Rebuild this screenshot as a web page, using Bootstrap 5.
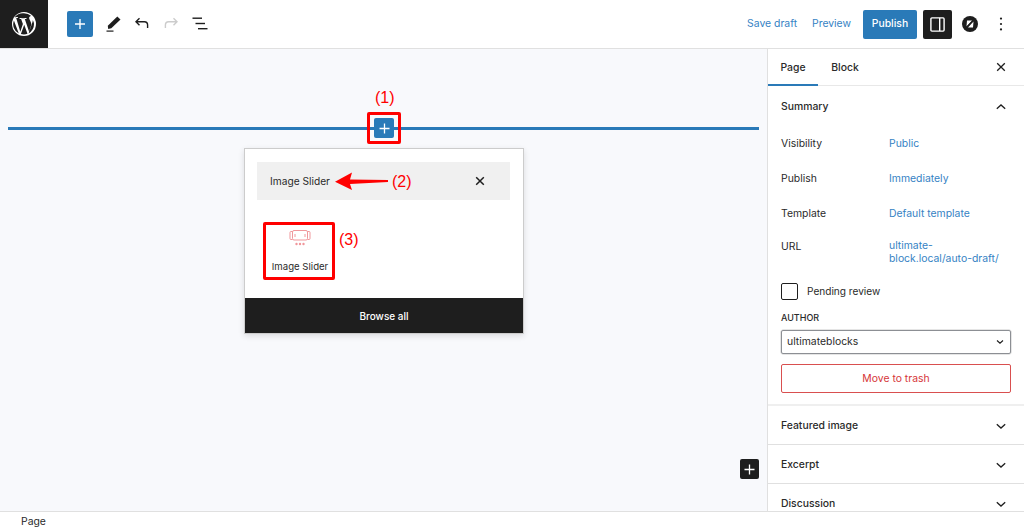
<!DOCTYPE html>
<html lang="en"><head><meta charset="utf-8"><title>Editor</title>
<link href="https://cdn.jsdelivr.net/npm/bootstrap@5.3.0/dist/css/bootstrap.min.css" rel="stylesheet">
<style>
html,body{height:531px;overflow:hidden}
body{font-family:Inter,"Liberation Sans",sans-serif;font-size:10.4px;color:#2a2a2a;background:#fff;line-height:14px}
.ed-top{height:49px;border-bottom:1px solid #e0e0e0;flex:none}
.ed-logo{width:48px;height:48px;background:#1e1e1e}
.ed-add{width:26px;height:26px;background:#2a7ab8;border-radius:2px;margin-left:19px}
.ed-tools{gap:9px;margin-left:10px}
.ed-ic{width:20px;height:20px;display:block}
.ed-link{color:#3582c4}
.ed-link2{margin-left:15px}
.ed-publish{background:#2a7ab8;color:#fff;height:29px;width:54px;border-radius:2px;font-weight:500;margin-left:12px}
.ed-toggle{width:29px;height:29px;background:#1e1e1e;border-radius:2px;margin-left:6px}
.ed-zic{margin-left:10px}
.ed-dots{margin-left:13px;margin-right:13px}
.ed-main{height:462px;flex:none;overflow:hidden}
.ed-canvas{background:#f8f9fc;width:767px;position:relative;flex:none}
.ed-side{width:257px;border-left:1px solid #e0e0e0;flex:none;background:#fff;overflow:hidden}
.ed-tabs{height:37px;border-bottom:1px solid #e8e8e8;padding-right:17px;flex:none}
.ed-tab{width:50px;height:37px;font-weight:500;text-align:center;line-height:38px}
.ed-tab2{width:54px}
.ed-tab-on{box-shadow:inset 0 -2px 0 #2a7ab8}
.ed-sec{border-bottom:1px solid #e0e0e0;height:39px;padding:2px 17px 0 13px;font-weight:500;flex:none}
.ed-sum{padding:0 13px;height:320px;border-bottom:2px solid #efefef;flex:none}
.ed-sumh{height:40px;font-weight:500;padding:1px 4px 0 0}
.ed-row{display:flex;height:35px;align-items:center}
.ed-lab{width:108px;flex:none}
.ed-url{height:46px;align-items:flex-start;padding-top:9px}
.ed-url .ed-val{line-height:13px;margin-top:-1px}
.ed-val{color:#3582c4}
.ed-chk{width:17px;height:17px;border:1px solid #1e1e1e;border-radius:2px;margin-right:9px}
.ed-pend{margin-top:5px;height:18px;font-size:10.1px}
.ed-auth{font-size:9px;margin-top:12px;line-height:12px;font-weight:500}
.ed-sel{height:24px;border:1px solid #8c8f94;border-radius:2px;padding:0 5px;margin-top:6px;box-shadow:0 0 0 .5px #ccc}
.ed-trash{height:29px;border:1px solid #d94f4f;border-radius:2px;color:#d63638;margin-top:10px}
.ed-status{height:20px;border-top:1px solid #e0e0e0;padding:1px 0 0 21px;flex:none}
.ed-line{position:absolute;left:8px;right:8px;top:78px;height:3px;background:#2a7ab8}
.ed-plus{position:absolute;left:374px;top:69px;width:20px;height:20px;background:#2a7ab8;border-radius:2px}
.ed-box{position:absolute;border:3px solid #f00;border-radius:2px}
.ed-box1{left:367px;top:63px;width:34px;height:32px}
.ed-box3{left:263px;top:173px;width:72px;height:58px}
.ed-note{position:absolute;color:#f00;font-family:"Liberation Sans",sans-serif;font-size:16px;line-height:18px}
.ed-n1{left:375px;top:40px}
.ed-n2{left:392px;top:124px}
.ed-n3{left:339px;top:182px}
.ed-arrow{position:absolute;left:334px;top:123px}
.ed-pop{position:absolute;left:244px;top:99px;width:280px;height:186px;background:#fff;border:1px solid #ccc;box-shadow:0 2px 6px rgba(0,0,0,.12)}
.ed-search{height:38px;margin:13px 13px 0 12px;background:#f0f0f0;padding:0 24px 0 13px;font-size:10.2px}
.ed-item{position:absolute;left:25px;top:80px;width:60px;text-align:center;font-size:9.6px;white-space:nowrap}
.ed-lbl{margin-top:13px}
.ed-browse{margin-top:auto;height:35px;background:#1e1e1e;color:#fff;font-weight:500;font-size:10px;padding-top:1px}
.ed-dark{position:absolute;left:740px;top:410px;width:19px;height:20px;background:#1e1e1e;border-radius:2px}
</style></head>
<body class="d-flex flex-column">
<header class="ed-top d-flex align-items-center">
  <div class="ed-logo d-flex align-items-center justify-content-center">
    <svg width="24" height="24" viewBox="0 0 24 24" fill="#fff"><path fill-rule="evenodd" d="M12 0a12 12 0 1 0 0 24 12 12 0 0 0 0-24zm0 1.200a10.800 10.800 0 0 1 7.300 2.850c-.1 0-.2-.02-.3-.02-1.100 0-1.900 1-1.900 2 0 .9.500 1.700 1.100 2.600.4.800 1 1.800 1 3.300 0 1-.4 2.200-.9 3.900l-1.200 4-4.300-12.800c.7 0 1.400-.1 1.400-.1.600-.1.600-1 0-1 0 0-1.900.2-3.200.2-1.200 0-3.100-.2-3.100-.2-.7 0-.7 1 0 1 0 0 .6.100 1.200.1l1.800 5-2.600 7.700L4.200 6.100c.7 0 1.400-.1 1.400-.1.600-.1.600-1 0-1 0 0-1.600.1-3 .2A10.800 10.800 0 0 1 12 1.200zM1.900 8.400l4.900 13.200A10.800 10.800 0 0 1 1.900 8.400zm10.300 4.400 3.300 9a10.800 10.800 0 0 1-6.600.2zm9-3.900c.5.900.8 1.900.8 3.100a10.800 10.800 0 0 1-5.400 9.400l3.300-9.600c.6-1.500.8-2.700.8-2.900 0-.3 0-.6-.1-.8z"/></svg>
  </div>
  <div class="ed-add d-flex align-items-center justify-content-center">
    <svg width="14" height="14" viewBox="0 0 14 14" stroke="#fff" stroke-width="1.400"><path d="M7 2v10M2 7h10"/></svg>
  </div>
  <div class="ed-tools d-flex align-items-center">
    <svg class="ed-ic" viewBox="0 0 20 20" fill="#1e1e1e"><path d="M14.300 2.500 17.500 5.600 8.300 14.200 5.200 15 4.800 11.800z"/><rect x="3.500" y="16.500" width="7" height="1.200"/></svg>
    <svg class="ed-ic" viewBox="0 0 20 20" fill="none" stroke="#1e1e1e" stroke-width="1.400"><path d="M7.500 4.300 4 7.800l3.500 3.400M4 7.800h8.400c2 0 3.200 1.300 3.200 3.300V14"/></svg>
    <svg class="ed-ic" viewBox="0 0 20 20" fill="none" stroke="#ccc" stroke-width="1.400"><path d="M12.500 4.300 16 7.800l-3.500 3.400M16 7.800H7.600c-2 0-3.200 1.300-3.200 3.300V14"/></svg>
    <svg class="ed-ic" viewBox="0 0 20 20" fill="#1e1e1e"><rect x="2.500" y="3.500" width="9.500" height="1.400"/><rect x="5.500" y="8.800" width="9.500" height="1.400"/><rect x="8" y="14" width="9.500" height="1.400"/></svg>
  </div>
  <div class="d-flex align-items-center ms-auto">
    <span class="ed-link">Save draft</span>
    <span class="ed-link ed-link2">Preview</span>
    <span class="ed-publish d-flex align-items-center justify-content-center">Publish</span>
    <span class="ed-toggle d-flex align-items-center justify-content-center">
      <svg width="15" height="15" viewBox="0 0 15 15" fill="none" stroke="#fff" stroke-width="1.400"><rect x=".9" y=".9" width="13.200" height="13.200" rx="1"/><path d="M9.700 1v13"/></svg>
    </span>
    <svg class="ed-zic" width="16" height="16" viewBox="0 0 16 16"><circle cx="8" cy="8" r="8" fill="#1e1e1e"/><path d="M5 4.500h5L4.500 10.500zM11 11.500H6l5.500-6z" fill="#fff"/><path d="M4 11.500 11.500 4" stroke="#1e1e1e" stroke-width="1"/></svg>
    <svg class="ed-dots" width="20" height="20" viewBox="0 0 20 20" fill="#1e1e1e"><circle cx="10" cy="4.600" r="1.100"/><circle cx="10" cy="10" r="1.100"/><circle cx="10" cy="15.400" r="1.100"/></svg>
  </div>
</header>
<div class="ed-main d-flex">
  <main class="ed-canvas">
    <div class="ed-line"></div>
    <div class="ed-plus d-flex align-items-center justify-content-center">
      <svg width="13" height="13" viewBox="0 0 13 13" stroke="#fff" stroke-width="1.300"><path d="M6.500 1.500v10M1.500 6.500h10"/></svg>
    </div>
    <div class="ed-box ed-box1"></div>
    <div class="ed-note ed-n1">(1)</div>
    <div class="ed-pop d-flex flex-column">
      <div class="ed-search d-flex align-items-center justify-content-between">
        <span>Image Slider</span>
        <svg width="12" height="12" viewBox="0 0 12 12" stroke="#1e1e1e" stroke-width="1.500"><path d="M2.200 2.200l7.600 7.600M9.800 2.200l-7.600 7.600"/></svg>
      </div>
      <div class="ed-item">
        <svg class="d-block mx-auto" width="22" height="18" viewBox="0 0 22 18" fill="none" stroke="#f0979b" stroke-width="1"><rect x="3.500" y="1.500" width="15" height="9.500" rx="1.500"/><path d="M3.500 2.500H2a1 1 0 0 0-1 1v6a1 1 0 0 0 1 1h1.500M18.500 2.500H20a1 1 0 0 1 1 1v6a1 1 0 0 1-1 1h-1.500M6 5v3M16 5v3"/><g fill="#f0979b" stroke="none"><circle cx="7.500" cy="15" r="1.200"/><circle cx="11" cy="15" r="1.200"/><circle cx="14.500" cy="15" r="1.200"/></g></svg>
        <div class="ed-lbl">Image Slider</div>
      </div>
      <div class="ed-browse d-flex align-items-center justify-content-center">Browse all</div>
    </div>
    <div class="ed-box ed-box3"></div>
    <div class="ed-note ed-n3">(3)</div>
    <div class="ed-note ed-n2">(2)</div>
    <svg class="ed-arrow" width="56" height="19" viewBox="0 0 56 19"><path d="M1 9.700 18 .5 16 7.500 54 8v2L16 12 18 18z" fill="#f00"/></svg>
    <div class="ed-dark d-flex align-items-center justify-content-center">
      <svg width="13" height="13" viewBox="0 0 13 13" stroke="#fff" stroke-width="1.300"><path d="M6.500 1.500v10M1.500 6.500h10"/></svg>
    </div>
  </main>
  <aside class="ed-side d-flex flex-column">
    <div class="ed-tabs d-flex align-items-center">
      <div class="ed-tab ed-tab-on">Page</div>
      <div class="ed-tab ed-tab2">Block</div>
      <svg class="ms-auto" width="12" height="12" viewBox="0 0 12 12" stroke="#1e1e1e" stroke-width="1.300"><path d="M2.200 2.200l7.600 7.600M9.800 2.200l-7.600 7.600"/></svg>
    </div>
    <section class="ed-sum">
      <div class="ed-sumh d-flex align-items-center justify-content-between">
        <span>Summary</span>
        <svg width="12" height="12" viewBox="0 0 12 12" fill="none" stroke="#1e1e1e" stroke-width="1.300"><path d="M1.800 7.800 6 4l4.200 3.800"/></svg>
      </div>
      <div class="ed-row"><span class="ed-lab">Visibility</span><span class="ed-val">Public</span></div>
      <div class="ed-row"><span class="ed-lab">Publish</span><span class="ed-val">Immediately</span></div>
      <div class="ed-row"><span class="ed-lab">Template</span><span class="ed-val">Default template</span></div>
      <div class="ed-row ed-url"><span class="ed-lab">URL</span><span class="ed-val">ultimate-<br>block.local/auto-draft/</span></div>
      <div class="ed-pend d-flex align-items-center"><span class="ed-chk"></span><span>Pending review</span></div>
      <div class="ed-auth">AUTHOR</div>
      <div class="ed-sel d-flex align-items-center justify-content-between">
        <span>ultimateblocks</span>
        <svg width="10" height="10" viewBox="0 0 10 10" fill="none" stroke="#1e1e1e" stroke-width="1.100"><path d="M2 3.500 5 6.200l3-2.700"/></svg>
      </div>
      <div class="ed-trash d-flex align-items-center justify-content-center">Move to trash</div>
    </section>
    <div class="ed-sec d-flex align-items-center justify-content-between"><span>Featured image</span><svg width="12" height="12" viewBox="0 0 12 12" fill="none" stroke="#1e1e1e" stroke-width="1.300"><path d="M1.800 4.200 6 8l4.200-3.800"/></svg></div>
    <div class="ed-sec d-flex align-items-center justify-content-between"><span>Excerpt</span><svg width="12" height="12" viewBox="0 0 12 12" fill="none" stroke="#1e1e1e" stroke-width="1.300"><path d="M1.800 4.200 6 8l4.200-3.800"/></svg></div>
    <div class="ed-sec d-flex align-items-center justify-content-between"><span>Discussion</span><svg width="12" height="12" viewBox="0 0 12 12" fill="none" stroke="#1e1e1e" stroke-width="1.300"><path d="M1.800 4.200 6 8l4.200-3.800"/></svg></div>
  </aside>
</div>
<footer class="ed-status d-flex align-items-center">Page</footer>
</body></html>
